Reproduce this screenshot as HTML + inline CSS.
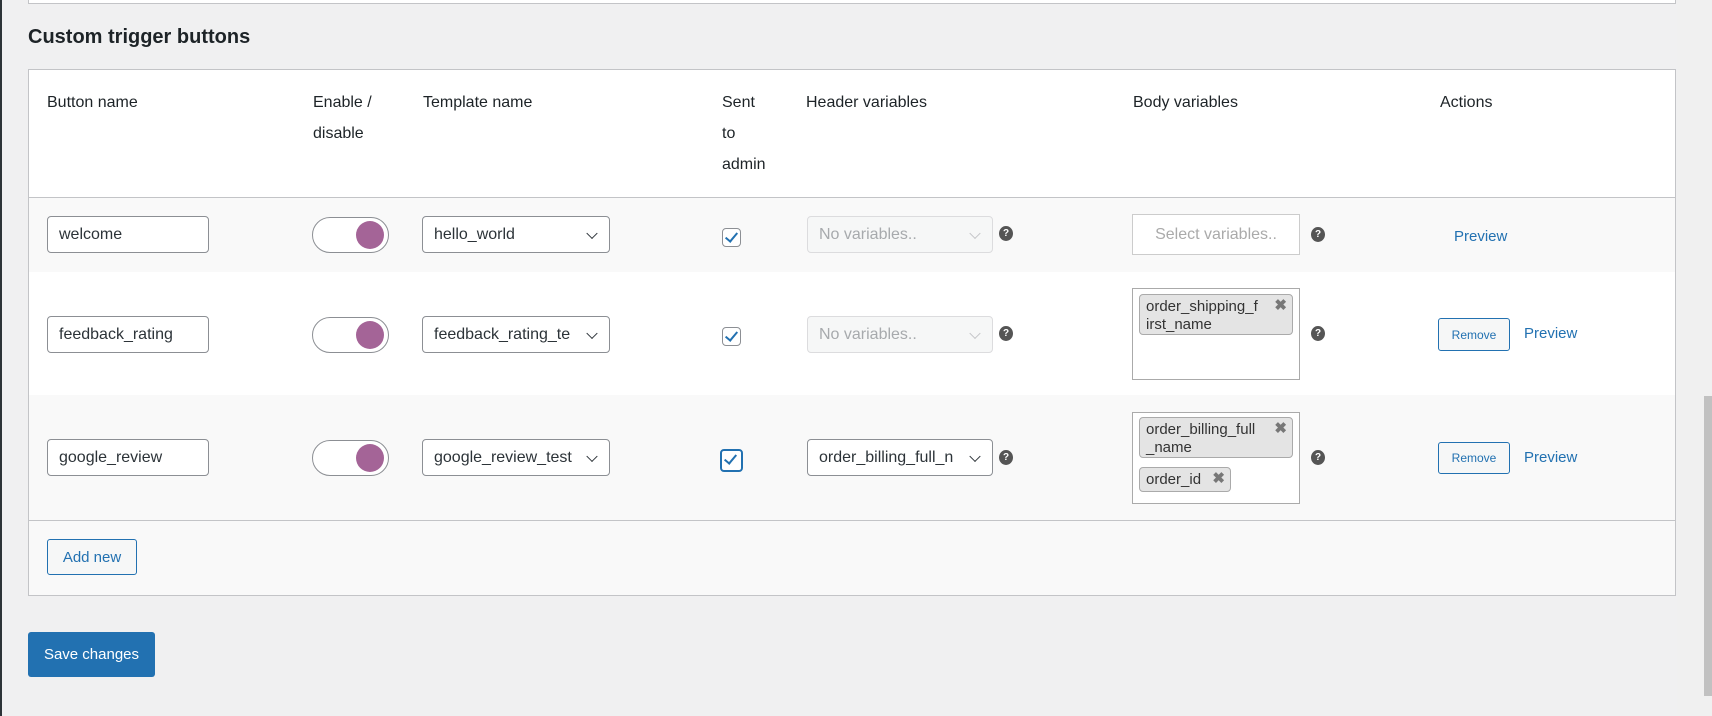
<!DOCTYPE html>
<html><head><meta charset="utf-8"><style>
*{box-sizing:border-box;margin:0;padding:0}
body{width:1712px;height:716px;background:#f0f0f1;font-family:"Liberation Sans",sans-serif;color:#1d2327;position:relative;overflow:hidden;font-size:15px}
.a{position:absolute}
.inp{position:absolute;background:#fff;border:1px solid #8c8f94;border-radius:4px;padding-left:11px;display:flex;align-items:center;font-size:16px;color:#2c3338}
.sel:after{content:"";position:absolute;right:13px;top:50%;width:7px;height:7px;border-right:1.5px solid #2c3338;border-bottom:1.5px solid #2c3338;transform:translateY(-70%) rotate(45deg)}
.dis{background:#f6f7f7;border-color:#dcdcde;color:#a7aaad}
.dis:after{border-color:#c3c4c7}
.tog{position:absolute;width:77px;height:36px;border:1px solid #8c8f94;border-radius:18px;background:#fff}
.tog:after{content:"";position:absolute;right:4px;top:3px;width:28px;height:28px;border-radius:50%;background:#a46497}
.cb{position:absolute;width:19px;height:19px;border:1px solid #8c8f94;border-radius:4px;background:#fff}
.cb:after{content:"";position:absolute;left:5px;top:1px;width:5px;height:10px;border-right:2px solid #2271b1;border-bottom:2px solid #2271b1;transform:rotate(40deg)}
.help{position:absolute;width:14px;height:15px;border-radius:50%;background:#555;color:#fff;font-size:10px;font-weight:bold;text-align:center;line-height:15px}
.lnk{position:absolute;color:#2271b1;font-size:15px}
.btn{position:absolute;border:1px solid #2271b1;border-radius:3px;color:#2271b1;background:#f6f7f7;font-size:12px;display:flex;align-items:center;justify-content:center}
.tag{position:absolute;background:#e4e4e4;border:1px solid #aaa;border-radius:4px;font-size:15px;line-height:18px;padding:3px 22px 2px 6px;color:#333}
.tag b{position:absolute;right:5px;top:2px;color:#777;font-size:15px}
.th{position:absolute;font-size:16px;line-height:31px;color:#1d2327}
</style></head><body>
<div class="a" style="left:0;top:0;width:2px;height:716px;background:#2c3338"></div>
<div class="a" style="left:28px;top:-2px;width:1648px;height:6px;background:#fff;border:1px solid #c3c4c7"></div>
<div class="a" style="left:1677px;top:0;width:35px;height:716px;background:#f0f0f0"></div>
<div class="a" style="left:1704px;top:396px;width:8px;height:300px;background:#c1c1c1"></div>
<div class="a" style="left:28px;top:26px;font-size:20px;font-weight:bold;color:#1d2327">Custom trigger buttons</div>
<div class="a" style="left:28px;top:69px;width:1648px;height:527px;background:#fff;border:1px solid #c3c4c7"></div>
<div class="a" style="left:29px;top:197px;width:1646px;height:75px;background:#f9f9f9;border-top:1px solid #c3c4c7"></div>
<div class="a" style="left:29px;top:395px;width:1646px;height:126px;background:#f9f9f9"></div>
<div class="a" style="left:29px;top:520px;width:1646px;height:75px;background:#f9f9f9;border-top:1px solid #c3c4c7"></div>
<div class="th" style="left:47px;top:87px">Button name</div>
<div class="th" style="left:313px;top:87px">Enable /<br>disable</div>
<div class="th" style="left:423px;top:87px">Template name</div>
<div class="th" style="left:722px;top:87px">Sent<br>to<br>admin</div>
<div class="th" style="left:806px;top:87px">Header variables</div>
<div class="th" style="left:1133px;top:87px">Body variables</div>
<div class="th" style="left:1440px;top:87px">Actions</div>
<!-- row1 -->
<div class="inp" style="left:47px;top:216px;width:162px;height:37px">welcome</div>
<div class="tog" style="left:312px;top:217px"></div>
<div class="inp sel" style="left:422px;top:216px;width:188px;height:37px">hello_world</div>
<div class="cb" style="left:722px;top:228px"></div>
<div class="inp sel dis" style="left:807px;top:216px;width:186px;height:37px">No variables..</div>
<div class="help" style="left:999px;top:226px">?</div>
<div class="inp" style="left:1132px;top:214px;width:168px;height:41px;border-color:#ccc;border-radius:0;color:#aaa;justify-content:center;padding:0">Select variables..</div>
<div class="help" style="left:1311px;top:227px">?</div>
<div class="lnk" style="left:1454px;top:228px">Preview</div>
<!-- row2 -->
<div class="inp" style="left:47px;top:316px;width:162px;height:37px">feedback_rating</div>
<div class="tog" style="left:312px;top:317px"></div>
<div class="inp sel" style="left:422px;top:316px;width:188px;height:37px;overflow:hidden;white-space:nowrap">feedback_rating_te</div>
<div class="cb" style="left:722px;top:327px"></div>
<div class="inp sel dis" style="left:807px;top:316px;width:186px;height:37px">No variables..</div>
<div class="help" style="left:999px;top:326px">?</div>
<div class="a" style="left:1132px;top:288px;width:168px;height:92px;background:#fff;border:1px solid #aaa"></div>
<div class="tag" style="left:1139px;top:294px;width:154px;height:41px">order_shipping_f<br>irst_name<b>✖</b></div>
<div class="help" style="left:1311px;top:326px">?</div>
<div class="btn" style="left:1438px;top:318px;width:72px;height:33px">Remove</div>
<div class="lnk" style="left:1524px;top:325px">Preview</div>
<!-- row3 -->
<div class="inp" style="left:47px;top:439px;width:162px;height:37px">google_review</div>
<div class="tog" style="left:312px;top:440px"></div>
<div class="inp sel" style="left:422px;top:439px;width:188px;height:37px;overflow:hidden;white-space:nowrap">google_review_test</div>
<div class="cb" style="left:720px;top:449px;width:23px;height:23px;border:2px solid #2271b1"></div>
<div class="inp sel" style="left:807px;top:439px;width:186px;height:37px;overflow:hidden;white-space:nowrap;padding-right:28px">order_billing_full_n</div>
<div class="help" style="left:999px;top:450px">?</div>
<div class="a" style="left:1132px;top:412px;width:168px;height:92px;background:#fff;border:1px solid #aaa"></div>
<div class="tag" style="left:1139px;top:417px;width:154px;height:41px">order_billing_full<br>_name<b>✖</b></div>
<div class="tag" style="left:1139px;top:467px;width:92px;height:25px">order_id<b>✖</b></div>
<div class="help" style="left:1311px;top:450px">?</div>
<div class="btn" style="left:1438px;top:442px;width:72px;height:32px">Remove</div>
<div class="lnk" style="left:1524px;top:449px">Preview</div>
<!-- footer -->
<div class="btn" style="left:47px;top:539px;width:90px;height:36px;font-size:15px;background:#f6f7f7">Add new</div>
<div class="a" style="left:28px;top:632px;width:127px;height:45px;background:#2271b1;border-radius:3px;color:#fff;font-size:15px;display:flex;align-items:center;justify-content:center">Save changes</div>
</body></html>
